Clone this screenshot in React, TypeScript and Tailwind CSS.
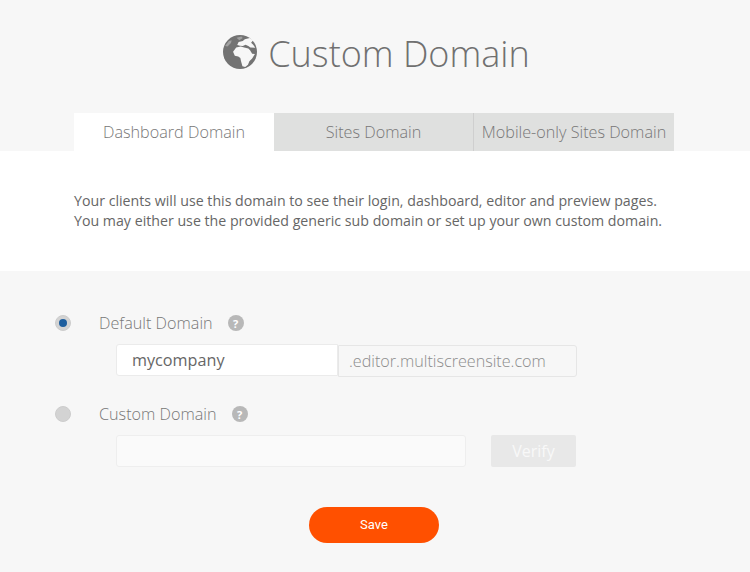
import { useState } from 'react';

function Globe() {
  return (
    <svg width="34" height="34" viewBox="27 23 98 98" className="shrink-0">
      <circle cx="76" cy="72" r="49" fill="#737373" />
      {/* Europe */}
      <path d="M68 52 L72 43 L84 40 L90 35 L104 32 L114 38 L108 45 L114 51 L120 60 L106 59 L100 55 L92 51 L84 55 L76 54 Z" fill="#f7f7f7" />
      {/* Africa */}
      <path d="M56 71 L65 59 L78 56 L88 59 L100 62 L105 67 L111 77 L119 78 L111 91 L103 99 L99 109 L91 115 L83 113 L79 99 L77 89 L71 85 L61 83 Z" fill="#f7f7f7" />
      {/* Faint land at the rim */}
      <path d="M66 31 L80 27 L84 32 L74 38 Z M33 55 L44 40 L52 38 L50 46 L40 56 Z" fill="#f7f7f7" fillOpacity="0.35" />
    </svg>
  );
}

function Help() {
  return (
    <span className="w-4 h-4 rounded-full bg-[#b8b8b8] text-white text-[11px] font-bold flex items-center justify-center leading-none">?</span>
  );
}

function Radio({ on }: { on?: boolean }) {
  return (
    <span className="w-4 h-4 rounded-full bg-[#d3d3d3] border border-[#cdcdcd] flex items-center justify-center shrink-0">
      {on && <span className="w-2 h-2 rounded-full bg-[#1d5e9e]" />}
    </span>
  );
}

export default function App() {
  const [tab, setTab] = useState(0);
  const tabs = ['Dashboard Domain', 'Sites Domain', 'Mobile-only Sites Domain'];

  return (
    <div className="w-[750px] h-[572px] overflow-hidden bg-[#f7f7f7] font-['Open_Sans',sans-serif] text-[#666]">
      {/* Title */}
      <div className="h-[113px] flex justify-center pt-[35px] pl-[3px] gap-[11px]">
        <Globe />
        <h1 className="text-[36px] leading-[38px] font-light text-[#707070]">Custom Domain</h1>
      </div>

      {/* Tabs */}
      <div className="flex pl-[74px] h-[38px]">
        {tabs.map((label, i) => (
          <button
            key={label}
            onClick={() => setTab(i)}
            className={`flex items-center justify-center text-[16.2px] font-light whitespace-nowrap w-[200px] ${i === 1 ? 'border-r border-[#cfcfcf]' : ''} ${tab === i ? 'bg-white text-[#777]' : 'bg-[#dfe0df] text-[#777]'}`}
          >
            {label}
          </button>
        ))}
      </div>

      {/* Description */}
      <div className="h-[120px] bg-white pt-[40px] px-[74px] text-[14.2px] leading-[20px] text-[#666] whitespace-nowrap">
        <p>Your clients will use this domain to see their login, dashboard, editor and preview pages.</p>
        <p>You may either use the provided generic sub domain or set up your own custom domain.</p>
      </div>

      {/* Form */}
      <div className="pt-[42px] pl-[55px]">
        <div className="flex items-center h-[20px]">
          <Radio on />
          <span className="ml-[28px] text-[16.2px] font-light text-[#777]">Default Domain</span>
          <span className="ml-[15px]"><Help /></span>
        </div>
        <div className="flex ml-[61px] mt-[11px] items-start">
          <div className="w-[222px] h-[32px] bg-white border border-[#ebebeb] rounded-l-[3px] flex items-center pl-[15px] pt-[1px] text-[16.2px] text-[#666]">mycompany</div>
          <div className="mt-[1px] w-[239px] h-[32px] bg-[#f7f7f7] border border-[#e6e6e6] rounded-r-[3px] flex items-center pl-[10px] text-[16.15px] font-light text-[#8c8c8c]">.editor.multiscreensite.com</div>
        </div>

        <div className="flex items-center h-[20px] mt-[27px]">
          <Radio />
          <span className="ml-[28px] text-[16.2px] font-light text-[#777]">Custom Domain</span>
          <span className="ml-[15px]"><Help /></span>
        </div>
        <div className="flex ml-[61px] mt-[11px]">
          <div className="w-[350px] h-[32px] bg-[#fafafa] border border-[#eeeeee] rounded-[3px]" />
          <div className="ml-[25px] w-[85px] h-[32px] bg-[#e8e8e8] rounded-[2px] flex items-center justify-center text-[16px] text-[#f8f8f8]">Verify</div>
        </div>
      </div>

      {/* Save */}
      <div className="flex justify-center mt-[40px] pr-[2px]">
        <button className="w-[130px] h-[36px] rounded-[18px] bg-[#ff5000] text-white text-[13px] font-['Roboto',sans-serif] flex items-center justify-center">Save</button>
      </div>
    </div>
  );
}
